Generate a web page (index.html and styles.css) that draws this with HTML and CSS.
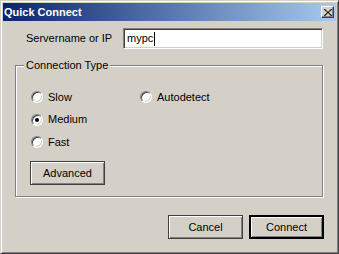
FILE: index.html
```html
<!DOCTYPE html>
<html>
<head>
<meta charset="utf-8">
<link rel="stylesheet" href="styles.css">
</head>
<body>
<div class="window">
  <div class="titlebar">
    <span class="title">Quick Connect</span>
    <span class="close"><svg width="8" height="7" viewBox="0 0 8 7"><path d="M0 0L1 0L4 3L7 0L8 0L8 0.5L4.7 3.5L8 6.5L8 7L7 7L4 4L1 7L0 7L0 6.5L3.3 3.5L0 0.5Z" fill="#000"/></svg></span>
  </div>
  <div class="content">
    <div class="server-row">
      <span class="server-label">Servername or IP</span>
      <div class="textbox"><span class="textval">mypc</span><span class="caret"></span></div>
    </div>
    <div class="group">
      <div class="legend">Connection Type</div>
      <div class="group-inner">
        <div class="radios">
          <div class="radio-item"><span class="radio"></span><span>Slow</span></div>
          <div class="radio-item"><span class="radio"></span><span>Autodetect</span></div>
          <div class="radio-item"><span class="radio checked"></span><span>Medium</span></div>
          <div class="radio-item"></div>
          <div class="radio-item"><span class="radio"></span><span>Fast</span></div>
          <div class="radio-item"></div>
        </div>
        <div class="btn adv">Advanced</div>
      </div>
    </div>
    <div class="actions">
      <div class="btn">Cancel</div>
      <div class="btn default">Connect</div>
    </div>
  </div>
</div>
</body>
</html>
```
FILE: styles.css
```css
* { box-sizing: border-box; }
html, body { margin: 0; padding: 0; }
body {
  font-family: "Liberation Sans", Arial, sans-serif;
  font-size: 11px;
  color: #000;
  background: #d4d0c8;
}
.window {
  width: 339px;
  height: 254px;
  background: #d4d0c8;
  border: 1px solid;
  border-color: #d4d0c8 #404040 #404040 #d4d0c8;
  box-shadow: inset 1px 1px #ffffff, inset -1px -1px #808080;
  padding: 2px;
  display: flex;
  flex-direction: column;
}
.titlebar {
  height: 18px;
  background: linear-gradient(to right, #0a246a, #a6caf0);
  display: flex;
  align-items: center;
  justify-content: space-between;
  padding: 0 2px 0 1px;
}
.title {
  color: #fff;
  font-weight: bold;
  font-size: 11px;
  line-height: 13px;
}
.close {
  width: 13px;
  height: 12px;
  background: #d4d0c8;
  border: 1px solid;
  border-color: #ffffff #404040 #404040 #ffffff;
  box-shadow: inset -1px -1px #808080;
  display: flex;
  align-items: center;
  justify-content: center;
}
.close svg { display: block; }
.content {
  flex: 1;
  display: flex;
  flex-direction: column;
  padding: 7px 12px 0 12px;
}
.server-row {
  display: flex;
  align-items: center;
  padding-left: 11px;
}
.server-label {
  width: 97px;
  line-height: 13px;
}
.textbox {
  width: 200px;
  height: 21px;
  background: #fff;
  border: 1px solid;
  border-color: #808080 #ffffff #ffffff #808080;
  box-shadow: inset 1px 1px #404040, inset -1px -1px #d4d0c8;
  display: flex;
  align-items: center;
  padding-left: 3px;
}
.textval { line-height: 13px; }
.caret {
  width: 1px;
  height: 14px;
  background: #000;
  margin-left: 1px;
}
.group {
  margin-top: 16px;
  width: 308px;
  border: 1px solid #808080;
  box-shadow: inset 1px 1px #ffffff, 1px 1px #ffffff;
}
.legend {
  width: fit-content;
  margin: -7px 0 0 8px;
  padding: 0 2px;
  line-height: 13px;
  background: #d4d0c8;
}
.group-inner {
  padding: 14px 0 11px 14px;
}
.radios {
  display: grid;
  grid-template-columns: 109px auto;
  grid-template-rows: 22px 23px 22px;
}
.radio-item {
  display: flex;
  align-items: center;
  gap: 5px;
  padding-left: 1px;
  line-height: 13px;
}
.radio {
  width: 12px;
  height: 12px;
  border-radius: 50%;
  background: #fff;
  border: 1px solid;
  border-color: #808080 #ffffff #ffffff #808080;
  box-shadow: inset 1px 1px #404040, inset -1px -1px #d4d0c8;
  display: flex;
  align-items: center;
  justify-content: center;
}
.radio.checked::after {
  content: "";
  width: 4px;
  height: 4px;
  border-radius: 50%;
  background: #000;
}
.btn {
  width: 75px;
  height: 24px;
  border: 1px solid #404040;
  box-shadow: inset 1px 1px #ffffff, inset -1px -1px #808080;
  background: #d4d0c8;
  display: flex;
  align-items: center;
  justify-content: center;
  line-height: 13px;
}
.adv { margin-top: 8px; }
.actions {
  display: flex;
  justify-content: flex-end;
  gap: 6px;
  margin-top: 18px;
}
.btn.default {
  border: 2px solid #000;
}
```
